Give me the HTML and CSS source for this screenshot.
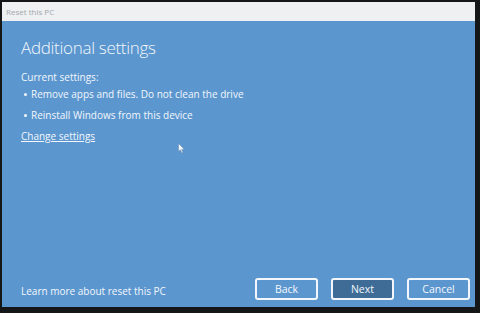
FILE: index.html
```html
<!DOCTYPE html>
<html lang="en">
<head>
    <meta charset="UTF-8">
    <title>Reset this PC</title>
    <link rel="stylesheet" href="styles.css">
</head>
<body>

    <!-- Jendela reset -->
    <div class="window">
        <div class="title-bar">Reset this PC</div>

        <div class="panel">
            <h1 class="heading">Additional settings</h1>

            <p class="label">Current settings:</p>
            <ul class="settings-list">
                <li>Remove apps and files. Do not clean the drive</li>
                <li>Reinstall Windows from this device</li>
            </ul>
            <a class="link" href="#">Change settings</a>

            <!-- Kursor mouse -->
            <svg class="cursor" width="7" height="11" viewBox="0 0 7 11">
                <path d="M0.5 0.5 L0.5 8.5 L2.4 6.8 L3.8 10 L5 9.4 L3.7 6.4 L6.3 6.3 Z" fill="#f4f7fb" stroke="#6c8fb3" stroke-width="0.6"/>
            </svg>

            <div class="footer">
                <a class="link-plain" href="#">Learn more about reset this PC</a>
                <div class="buttons">
                    <button type="button" class="btn">Back</button>
                    <button type="button" class="btn primary">Next</button>
                    <button type="button" class="btn">Cancel</button>
                </div>
            </div>
        </div>
    </div>

</body>
</html>
```

FILE: styles.css
```css
/* Bingkai layar (foto monitor) */
body {
    margin: 0;
    width: 480px;
    height: 313px;
    background: #141618;
    font-family: "Open Sans", "Noto Sans", Arial, sans-serif;
    color: #f3f7fb;
    overflow: hidden;
}

.window {
    display: flex;
    flex-direction: column;
    width: 473px;
    height: 305px;
    margin: 2px 0 0 2px;
}

/* Judul jendela */
.title-bar {
    height: 19px;
    line-height: 19px;
    padding-left: 4px;
    background: #eef0f2;
    color: #a3a9ae;
    font-size: 8px;
}

/* Isi biru */
.panel {
    flex: 1;
    display: flex;
    flex-direction: column;
    position: relative;
    padding: 15px 5px 7px 19px;
    background: #5b96cf;
}

.heading {
    margin: 0 0 10px;
    font-size: 17px;
    line-height: 24px;
    font-weight: 300;
    letter-spacing: -0.3px;
}

.label {
    margin: 0 0 3px;
    font-size: 10px;
    line-height: 14px;
}

.settings-list {
    margin: 0;
    padding: 0;
    list-style: none;
}

.settings-list li {
    position: relative;
    padding-left: 10px;
    margin-bottom: 7px;
    font-size: 10px;
    line-height: 14px;
}

.settings-list li::before {
    content: "";
    position: absolute;
    left: 3px;
    top: 6px;
    width: 3px;
    height: 3px;
    border-radius: 50%;
    background: #f3f7fb;
}

.link {
    align-self: flex-start;
    font-size: 10px;
    line-height: 14px;
    color: #f3f7fb;
}

.cursor {
    position: absolute;
    left: 176px;
    top: 122px;
}

/* Bagian bawah */
.footer {
    display: flex;
    align-items: center;
    justify-content: space-between;
    margin-top: auto;
}

.link-plain {
    margin-top: 4px;
    font-size: 10px;
    color: #f3f7fb;
    text-decoration: none;
}

.buttons {
    display: flex;
    gap: 13px;
}

.btn {
    width: 63px;
    height: 22px;
    padding: 0;
    border: 2px solid #f3f7fb;
    border-radius: 3px;
    background: transparent;
    color: #f3f7fb;
    font-family: inherit;
    font-size: 10.5px;
}

.btn.primary {
    background: #3f6c97;
}
```
